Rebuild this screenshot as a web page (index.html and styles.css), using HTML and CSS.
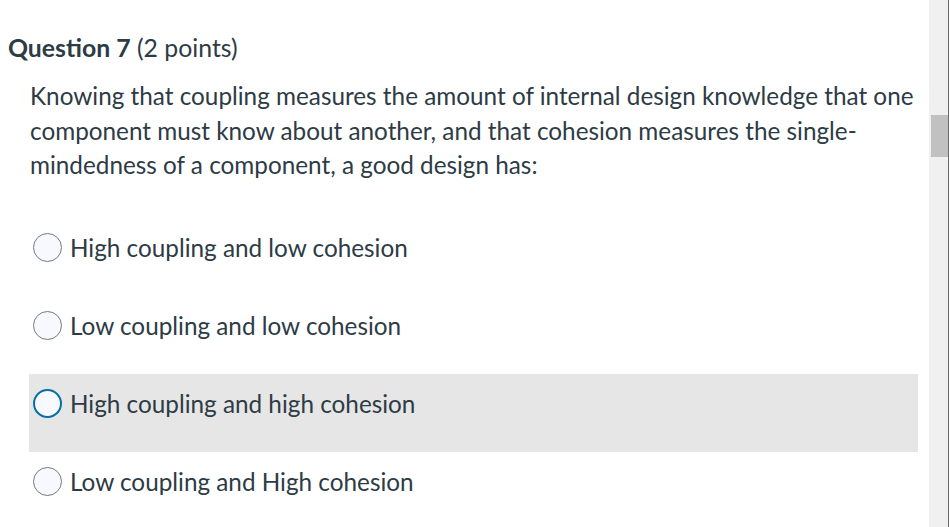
FILE: index.html
```html
<!DOCTYPE html>
<html>
<head>
<meta charset="utf-8">
<link rel="stylesheet" href="styles.css">
</head>
<body>
<div class="page">
  <main class="main">
    <h2 class="qtitle"><span class="qnum">Question 7</span> (2 points)</h2>
    <p class="qtext">Knowing that coupling measures the amount of internal design knowledge that one component must know about another, and that cohesion measures the single-mindedness of a component, a good design has:</p>
    <div class="options">
      <label class="opt"><span class="radio"></span><span class="otext">High coupling and low cohesion</span></label>
      <label class="opt"><span class="radio"></span><span class="otext">Low coupling and low cohesion</span></label>
      <label class="opt hover"><span class="radio"></span><span class="otext">High coupling and high cohesion</span></label>
      <label class="opt"><span class="radio"></span><span class="otext">Low coupling and High cohesion</span></label>
    </div>
  </main>
  <div class="scrollbar"><div class="thumb"></div></div>
</div>
</body>
</html>
```
FILE: styles.css
```css
html, body {
  margin: 0;
  padding: 0;
  background: #fff;
}
body {
  font-family: Lato, "Open Sans", sans-serif;
  color: #2d3b45;
}
.page {
  display: flex;
  height: 527px;
  overflow: hidden;
}
.main {
  flex: 1;
  padding: 0 11px 0 8px;
}
.qtitle {
  margin: 33px 0 0 0;
  font-size: 24.8px;
  font-weight: 400;
  line-height: 30px;
}
.qnum {
  font-weight: 700;
}
.qtext {
  margin: 16px 0 0 22px;
  font-size: 24.3px;
  line-height: 34.6px;
}
.options {
  margin: 35px 0 0 21px;
  display: flex;
  flex-direction: column;
}
.opt {
  height: 78px;
  display: flex;
  align-items: center;
  padding-left: 4px;
  padding-bottom: 18px;
  box-sizing: border-box;
  gap: 8px;
  font-size: 24.3px;
}
.opt.hover {
  background: #e6e6e6;
}
.radio {
  width: 29px;
  height: 29px;
  box-sizing: border-box;
  border-radius: 50%;
  border: 1px solid #727a80;
  background: #f8f9ff;
  flex: none;
}
.opt.hover .radio {
  border: 2.5px solid #0770a3;
}
.scrollbar {
  width: 20px;
  background: #f0f0f0;
  border-right: 1px solid #6a6a6a;
  flex: none;
  padding-top: 115px;
  box-sizing: border-box;
}
.thumb {
  margin-left: 2px;
  width: 17px;
  height: 42px;
  background: #c1c1c1;
}
```
